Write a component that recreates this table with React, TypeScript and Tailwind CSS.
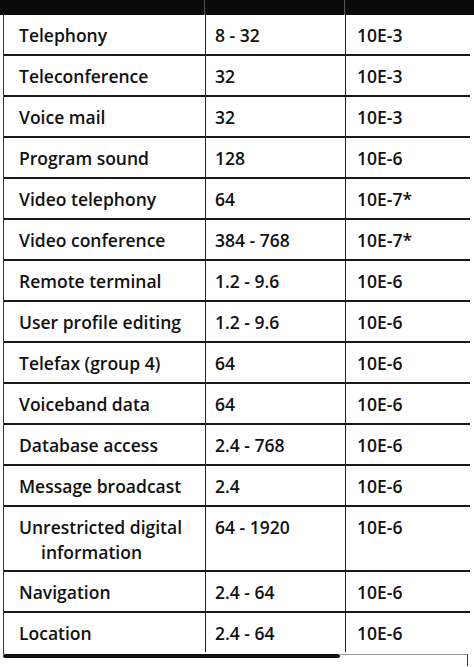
const rows = [
  { service: 'Telephony', rate: '8 - 32', ber: '10E-3' },
  { service: 'Teleconference', rate: '32', ber: '10E-3' },
  { service: 'Voice mail', rate: '32', ber: '10E-3' },
  { service: 'Program sound', rate: '128', ber: '10E-6' },
  { service: 'Video telephony', rate: '64', ber: '10E-7*' },
  { service: 'Video conference', rate: '384 - 768', ber: '10E-7*' },
  { service: 'Remote terminal', rate: '1.2 - 9.6', ber: '10E-6' },
  { service: 'User profile editing', rate: '1.2 - 9.6', ber: '10E-6' },
  { service: 'Telefax (group 4)', rate: '64', ber: '10E-6' },
  { service: 'Voiceband data', rate: '64', ber: '10E-6' },
  { service: 'Database access', rate: '2.4 - 768', ber: '10E-6' },
  { service: 'Message broadcast', rate: '2.4', ber: '10E-6' },
  { service: 'Unrestricted digital', more: 'information', rate: '64 - 1920', ber: '10E-6' },
  { service: 'Navigation', rate: '2.4 - 64', ber: '10E-6' },
  { service: 'Location', rate: '2.4 - 64', ber: '10E-6' },
];

export default function App() {
  return (
    <div
      className="w-[474px] h-[667px] bg-white text-[#111] overflow-hidden"
      style={{ fontFamily: '"Open Sans", "Liberation Sans", sans-serif' }}
    >
      {/* Header band */}
      <div className="h-[15px] bg-[#0a0a0a] flex">
        <div className="w-[205px] border-r border-[#555]"></div>
        <div className="w-[140px] border-r border-[#555]"></div>
        <div className="flex-1"></div>
      </div>

      <div className="ml-[3px] mr-[4px] border-l border-[#333]">
        {rows.map((row, i) => (
          <div
            key={row.service}
            className={`flex border-b-2 ${
              i === rows.length - 1 ? 'border-transparent' : 'border-[#1a1a1a]'
            } ${row.more ? 'h-[65px]' : 'h-[41px]'}`}
          >
            <div className="w-[202px] border-r border-[#222] pl-[15px] pt-[8px] text-[17.5px] font-semibold leading-[25px]">
              <div>{row.service}</div>
              {row.more && <div className="pl-[22px]">{row.more}</div>}
            </div>
            <div className="w-[140px] border-r border-[#222] pl-[9px] pt-[8px] text-[17.5px] font-semibold leading-[25px]">
              {row.rate}
            </div>
            <div className="flex-1 pl-[11px] pt-[8px] text-[17.5px] font-semibold leading-[25px]">
              {row.ber}
            </div>
          </div>
        ))}
      </div>

      {/* Bottom rule */}
      <div className="flex items-start">
        <div className="ml-[3px] w-[337px] h-[4px] bg-[#111] rounded-full"></div>
        <div className="flex-1 h-[1px] bg-[#999]"></div>
        <div className="w-[1px] h-[12px] bg-[#333] mr-[6px]"></div>
      </div>
    </div>
  );
}
